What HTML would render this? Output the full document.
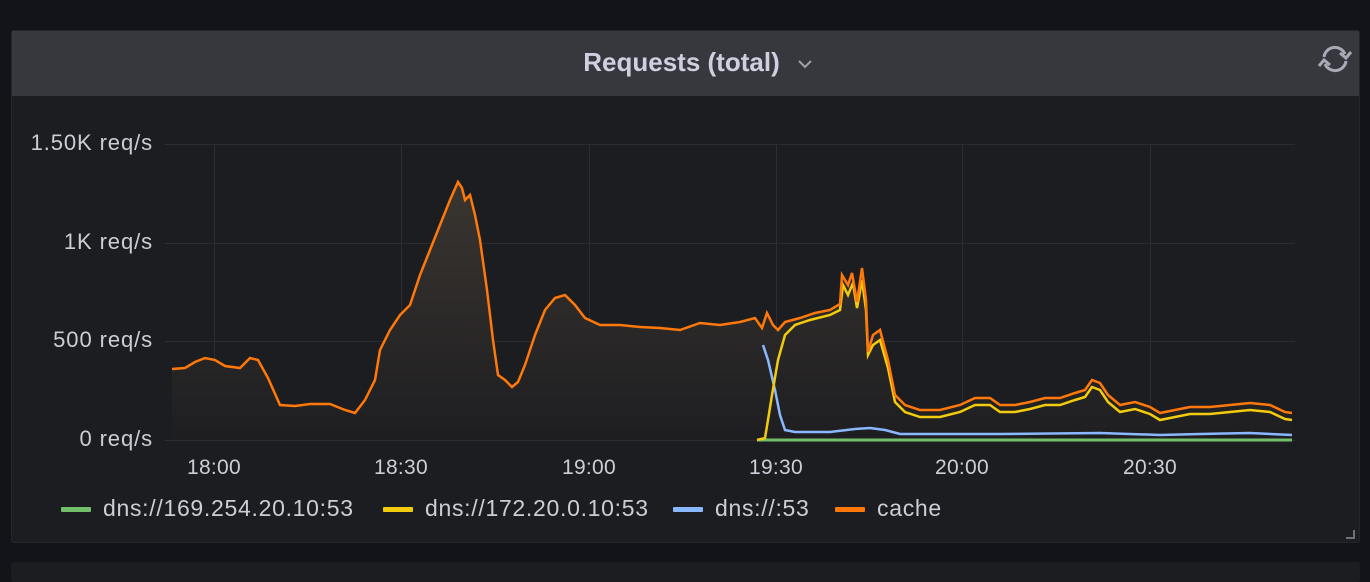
<!DOCTYPE html>
<html><head><meta charset="utf-8"><style>
html,body{margin:0;padding:0;background:#131419;width:1370px;height:570px;overflow:hidden;font-family:"Liberation Sans",sans-serif}
.panel{position:absolute;left:11px;top:30px;width:1349px;height:513px;background:#1c1d21;border-radius:3px;border:1px solid #25262b;box-sizing:border-box}
.hdr{position:absolute;left:0;top:0;right:0;height:65px;background:#37383d}
.title{position:absolute;left:0;right:0;top:16px;text-align:center;color:#cfcfe0;font-weight:bold;font-size:26px;padding-right:8px}
.ylab{position:absolute;right:1217px;color:#cccdd6;font-size:22px;letter-spacing:0.9px;text-align:right;white-space:nowrap}
.xlab{position:absolute;top:456px;color:#cccdd6;font-size:21px;letter-spacing:0.3px;transform:translateX(-50%)}
.leg{position:absolute;top:495px;color:#cccdd6;font-size:23px;letter-spacing:0.7px;white-space:nowrap}
.sw{display:inline-block;width:30px;height:5px;vertical-align:middle;margin-right:12px;border-radius:1px}
.bottom{position:absolute;left:11px;top:562px;width:1349px;height:20px;background:#1c1d21;border-radius:3px}
</style></head><body>
<div class="panel"><div class="hdr"></div>
<div class="title">Requests (total)</div>
</div>
<svg style="position:absolute;left:797px;top:58px" width="16" height="12" viewBox="0 0 16 12" fill="none" stroke="#9fa0ab" stroke-width="2"><path d="M2 3 L8 9 L14 3"/></svg>
<svg style="position:absolute;left:1316px;top:43px" width="38" height="32" viewBox="0 0 38 32" fill="none" stroke="#a9aab6" stroke-width="3">
<path d="M8 14 A11 11 0 0 1 29 11"/><path d="M30 18 A11 11 0 0 1 9 21"/>
<path d="M24 10 L30 15 L35 9" /><path d="M3 23 L8 17 L14 22"/>
</svg>
<div class="ylab" style="top:130px">1.50K req/s</div>
<div class="ylab" style="top:229px">1K req/s</div>
<div class="ylab" style="top:327px">500 req/s</div>
<div class="ylab" style="top:426px">0 req/s</div>
<div class="xlab" style="left:214px">18:00</div>
<div class="xlab" style="left:401px">18:30</div>
<div class="xlab" style="left:589px">19:00</div>
<div class="xlab" style="left:776px">19:30</div>
<div class="xlab" style="left:962px">20:00</div>
<div class="xlab" style="left:1150px">20:30</div>
<svg style="position:absolute;left:0;top:0" width="1370" height="570">
<defs><linearGradient id="g" x1="0" y1="0" x2="0" y2="1"><stop offset="0" stop-color="#3a3530"/><stop offset="1" stop-color="#1e1e21"/></linearGradient></defs>
<g stroke="#2c2d32" stroke-width="1">
<line x1="165" y1="144.5" x2="1295" y2="144.5"/><line x1="165" y1="243.5" x2="1295" y2="243.5"/><line x1="165" y1="341.5" x2="1295" y2="341.5"/><line x1="165" y1="440.5" x2="1295" y2="440.5"/>
<line x1="214.5" y1="144" x2="214.5" y2="441"/><line x1="401.5" y1="144" x2="401.5" y2="441"/><line x1="589.5" y1="144" x2="589.5" y2="441"/><line x1="776.5" y1="144" x2="776.5" y2="441"/><line x1="962.5" y1="144" x2="962.5" y2="441"/><line x1="1150.5" y1="144" x2="1150.5" y2="441"/>
</g>
<polygon fill="url(#g)" points="172,440 172,369 185,368 195,362 205,358 215,360 225,366 240,368 250,358 258,360 268,378 280,405 295,406 310,404 330,404 345,410 355,413 365,400 375,380 380,350 390,330 400,315 410,305 415,290 420,275 430,250 440,225 450,200 458,182 462,188 465,200 470,195 475,215 480,240 487,290 493,340 498,375 505,380 512,387 518,382 525,365 535,335 545,310 555,298 565,295 575,305 585,318 600,325 620,325 640,327 660,328 680,330 700,323 720,325 740,322 755,318 762,328 767,313 773,325 778,330 785,322 800,318 815,313 830,310 840,304 842,275 848,285 852,273 857,302 862,268 866,300 868,352 873,335 880,330 888,360 895,395 905,405 920,410 940,410 960,405 975,398 990,398 1000,405 1015,405 1030,402 1045,398 1060,398 1075,393 1085,390 1092,380 1100,383 1108,395 1120,405 1135,402 1150,407 1160,413 1175,410 1190,407 1210,407 1230,405 1250,403 1270,405 1285,412 1292,413 1292,440"/>
<line x1="757" y1="440" x2="1292" y2="440" stroke="#73bf69" stroke-width="3"/>
<polyline fill="none" stroke="#8ab8ff" stroke-width="2.5" points="763,345 768,360 775,390 780,415 785,430 795,432 830,432 855,429 870,428 885,430 900,434 950,434 1000,434 1100,433 1160,435 1200,434 1250,433 1292,435"/>
<polyline fill="none" stroke="#f2cc0c" stroke-width="2.5" points="757,440 765,438 768,420 772,395 778,360 785,335 795,325 810,320 830,315 840,310 843,285 848,295 853,283 857,308 862,280 866,310 868,355 873,345 880,340 888,368 895,402 905,412 920,417 940,417 960,412 975,405 990,405 1000,412 1015,412 1030,409 1045,405 1060,405 1075,400 1085,397 1092,387 1100,390 1108,402 1120,412 1135,409 1150,414 1160,420 1175,417 1190,414 1210,414 1230,412 1250,410 1270,412 1285,419 1292,420"/>
<polyline fill="none" stroke="#ff780a" stroke-width="2.5" points="172,369 185,368 195,362 205,358 215,360 225,366 240,368 250,358 258,360 268,378 280,405 295,406 310,404 330,404 345,410 355,413 365,400 375,380 380,350 390,330 400,315 410,305 415,290 420,275 430,250 440,225 450,200 458,182 462,188 465,200 470,195 475,215 480,240 487,290 493,340 498,375 505,380 512,387 518,382 525,365 535,335 545,310 555,298 565,295 575,305 585,318 600,325 620,325 640,327 660,328 680,330 700,323 720,325 740,322 755,318 762,328 767,313 773,325 778,330 785,322 800,318 815,313 830,310 840,304 842,275 848,285 852,273 857,302 862,268 866,300 868,352 873,335 880,330 888,360 895,395 905,405 920,410 940,410 960,405 975,398 990,398 1000,405 1015,405 1030,402 1045,398 1060,398 1075,393 1085,390 1092,380 1100,383 1108,395 1120,405 1135,402 1150,407 1160,413 1175,410 1190,407 1210,407 1230,405 1250,403 1270,405 1285,412 1292,413"/>
<path d="M1354 530 V538 H1346" stroke="#6e6f78" stroke-width="2" fill="none"/>
</svg>
<div class="leg" style="left:61px"><span class="sw" style="background:#73bf69"></span>dns://169.254.20.10:53</div>
<div class="leg" style="left:383px"><span class="sw" style="background:#f2cc0c"></span>dns://172.20.0.10:53</div>
<div class="leg" style="left:673px"><span class="sw" style="background:#8ab8ff"></span>dns://:53</div>
<div class="leg" style="left:835px"><span class="sw" style="background:#ff780a"></span>cache</div>
<div class="bottom"></div>
</body></html>
